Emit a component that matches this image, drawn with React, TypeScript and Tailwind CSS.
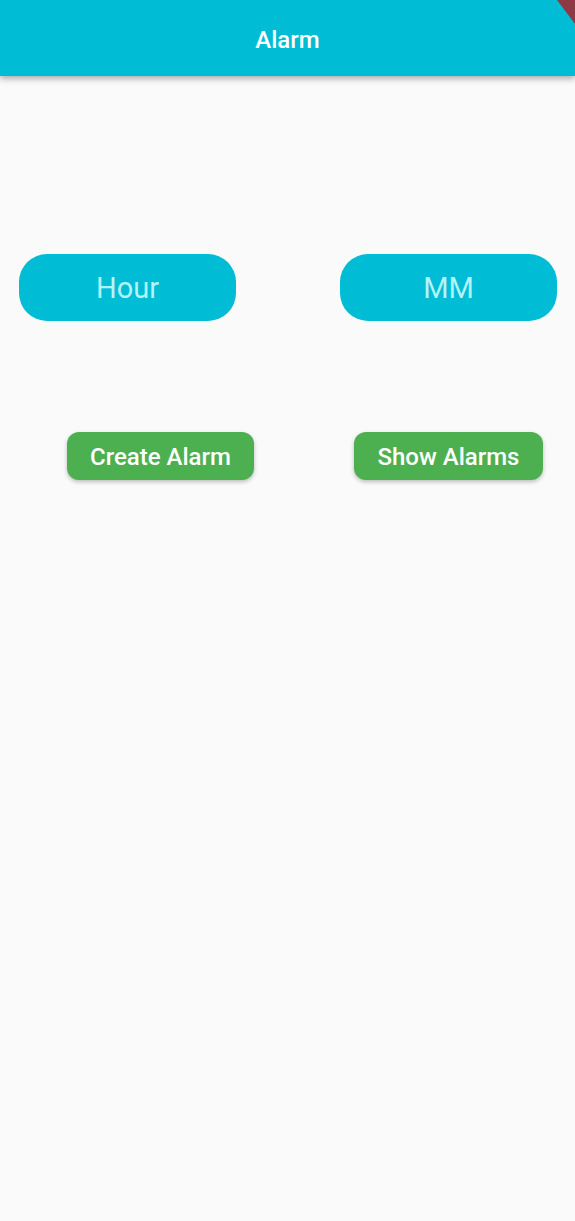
const App = () => {
  return (
    <div className="relative min-h-[1221px] w-full bg-[#fafafa] font-['Roboto',sans-serif]">
      <div className="relative z-10 flex h-[76px] items-center justify-center bg-[#00bcd4] pt-[3px] shadow-[0_3px_6px_rgba(0,0,0,0.3)]">
        <h1 className="text-[24px] font-medium text-white">Alarm</h1>
      </div>

      <div className="mt-[178px] flex justify-between px-[19px]">
        <div className="flex h-[67px] w-[217px] items-center justify-center rounded-[28px] bg-[#00bcd4] pt-[2px] text-[29px] text-[#b4f3fa]">
          Hour
        </div>
        <div className="mr-[-1px] flex h-[67px] w-[217px] items-center justify-center rounded-[28px] bg-[#00bcd4] pt-[2px] text-[29px] text-[#b4f3fa]">
          MM
        </div>
      </div>

      <div className="mt-[111px] flex gap-[100px] pl-[67px]">
        <button className="h-[48px] w-[187px] rounded-[12px] bg-[#4caf50] pt-[2px] text-[24px] font-medium text-white shadow-[0_2px_4px_rgba(0,0,0,0.25)]">
          Create Alarm
        </button>
        <button className="h-[48px] w-[189px] rounded-[12px] bg-[#4caf50] pt-[2px] text-[24px] font-medium text-white shadow-[0_2px_4px_rgba(0,0,0,0.25)]">
          Show Alarms
        </button>
      </div>

      {/* debug banner corner */}
      <svg className="absolute right-0 top-0 z-20" width="20" height="26" viewBox="0 0 20 26">
        <polygon points="2,0 20,0 20,24" fill="#8e3a44" />
      </svg>
    </div>
  );
};

export default App;
